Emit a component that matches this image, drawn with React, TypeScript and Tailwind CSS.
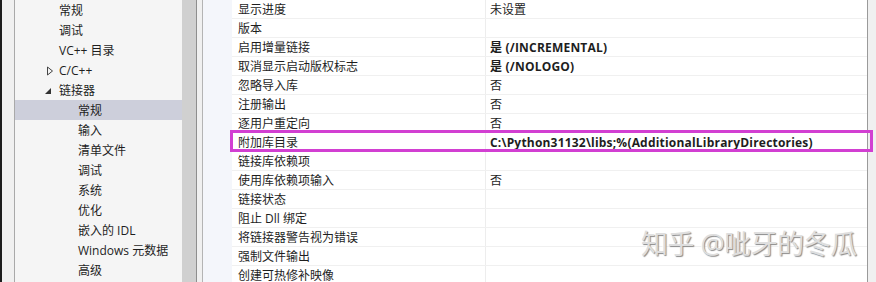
const font = "font-['Open_Sans','Noto_Sans_CJK_SC',sans-serif]"

type TreeItem = { label: string; level: 0 | 1; arrow?: 'closed' | 'open'; selected?: boolean }

const tree: TreeItem[] = [
  { label: '常规', level: 0 },
  { label: '调试', level: 0 },
  { label: 'VC++ 目录', level: 0 },
  { label: 'C/C++', level: 0, arrow: 'closed' },
  { label: '链接器', level: 0, arrow: 'open' },
  { label: '常规', level: 1, selected: true },
  { label: '输入', level: 1 },
  { label: '清单文件', level: 1 },
  { label: '调试', level: 1 },
  { label: '系统', level: 1 },
  { label: '优化', level: 1 },
  { label: '嵌入的 IDL', level: 1 },
  { label: 'Windows 元数据', level: 1 },
  { label: '高级', level: 1 },
]

type Prop = { name: string; value?: string; bold?: boolean; marked?: boolean }

const props: Prop[] = [
  { name: '显示进度', value: '未设置' },
  { name: '版本' },
  { name: '启用增量链接', value: '是 (/INCREMENTAL)', bold: true },
  { name: '取消显示启动版权标志', value: '是 (/NOLOGO)', bold: true },
  { name: '忽略导入库', value: '否' },
  { name: '注册输出', value: '否' },
  { name: '逐用户重定向', value: '否' },
  { name: '附加库目录', value: 'C:\\Python31132\\libs;%(AdditionalLibraryDirectories)', bold: true, marked: true },
  { name: '链接库依赖项' },
  { name: '使用库依赖项输入', value: '否' },
  { name: '链接状态' },
  { name: '阻止 Dll 绑定' },
  { name: '将链接器警告视为错误' },
  { name: '强制文件输出' },
  { name: '创建可热修补映像' },
]

function Arrow({ kind }: { kind: 'closed' | 'open' }) {
  if (kind === 'closed') {
    return (
      <svg width="8" height="10" viewBox="0 0 8 10" className="absolute left-[31px] top-[6px]">
        <path d="M1.5 1 L6.5 5 L1.5 9 Z" fill="none" stroke="#444" strokeWidth="1" />
      </svg>
    )
  }
  return (
    <svg width="8" height="8" viewBox="0 0 8 8" className="absolute left-[29px] top-[7px]">
      <path d="M7 1 L7 7 L1 7 Z" fill="#333" />
    </svg>
  )
}

function TreeRow({ item }: { item: TreeItem }) {
  return (
    <div
      className={`relative h-[20px] pt-[1px] flex items-center shrink-0 text-[12px] text-[#1e1e1e] ${
        item.level === 0 ? 'pl-[44px]' : 'pl-[63px]'
      } ${item.selected ? 'bg-[#cdcfdb]' : ''}`}
    >
      {item.arrow && <Arrow kind={item.arrow} />}
      <span className="whitespace-pre">{item.label}</span>
    </div>
  )
}

function PropRow({ p }: { p: Prop }) {
  return (
    <div className="relative h-[19px] shrink-0 flex border-b border-[#f0f0f0]">
      <div className="w-[254px] shrink-0 pl-[6px] pt-[1px] flex items-center border-r border-[#ededed] whitespace-pre">
        {p.name}
      </div>
      <div
        className={`flex-1 pl-[4px] pt-[1px] flex items-center whitespace-pre ${
          p.bold ? 'font-bold tracking-[0.2px]' : ''
        }`}
      >
        {p.value}
      </div>
      {p.marked && (
        <div className="absolute left-[-2px] right-[-6px] top-[-3px] bottom-[-1px] border-[3px] border-[#d23fd2]" />
      )}
    </div>
  )
}

export default function App() {
  return (
    <div className={`w-[876px] h-[282px] overflow-hidden flex bg-white ${font}`}>
      <div className="w-[2px] shrink-0 bg-[#1c1c1c]" />
      <div className="w-[13px] shrink-0 bg-[#f0f0f0] border-r border-[#a9a9a9]" />

      <div className="w-[167px] shrink-0 bg-[#f5f5f5] flex flex-col">
        {tree.map((t, i) => (
          <TreeRow key={i} item={t} />
        ))}
      </div>

      <div className="w-[15px] shrink-0 bg-[#d0d0d0] border-r border-[#8e8e8e]" />
      <div className="w-[6px] shrink-0 bg-[#f0f0f0] border-r border-[#b4b4b4]" />

      <div className="w-[29px] shrink-0 bg-[#f4f6fb]" />

      <div className="relative w-[636px] shrink-0 flex flex-col bg-white border-r border-[#9a9a9a] text-[12px] text-[#1e1e1e]">
        {props.map((p, i) => (
          <PropRow key={i} p={p} />
        ))}
        <div className="absolute left-[409px] top-[230px] text-[27px] leading-none tracking-[-0.5px] text-[#dedede] whitespace-pre [text-shadow:1px_1px_1px_#8a8a8a,-1px_-1px_0_#ffffff]">
          知乎 @呲牙的冬瓜
        </div>
      </div>

      <div className="flex-1 bg-[#f0f0f0]" />
    </div>
  )
}
